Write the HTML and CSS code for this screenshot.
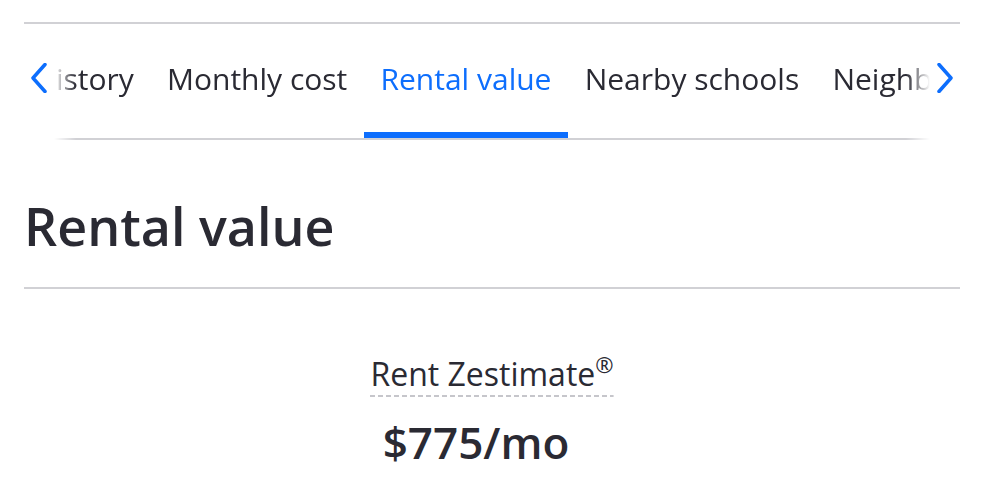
FILE: index.html
```html
<!DOCTYPE html>
<html>
<head>
<meta http-equiv="Content-Type" content="text/html;charset=UTF-8">
<link rel="stylesheet" href="styles.css">
</head>
<body>
<div class="homeDetails">
  <div class="tabNav">
    <button class="tabArrow" type="button" aria-label="Previous">
      <svg width="18" height="30" viewBox="0 0 18 30"><path d="M15 1.5 L3 15 L15 28.5" fill="none" stroke="#0d6efd" stroke-width="3.5" stroke-linecap="round" stroke-linejoin="round"/></svg>
    </button>
    <div class="tabViewport">
      <ul class="tabTrack">
        <li class="tab">Price history</li>
        <li class="tab">Monthly cost</li>
        <li class="tab active">Rental value</li>
        <li class="tab">Nearby schools</li>
        <li class="tab">Neighborhood</li>
      </ul>
    </div>
    <button class="tabArrow" type="button" aria-label="Next">
      <svg width="18" height="30" viewBox="0 0 18 30"><path d="M3 1.5 L15 15 L3 28.5" fill="none" stroke="#0d6efd" stroke-width="3.5" stroke-linecap="round" stroke-linejoin="round"/></svg>
    </button>
  </div>

  <h2 class="sectionTitle">Rental value</h2>

  <div class="rentBox">
    <span class="rentLabel">Rent Zestimate<sup>&reg;</sup></span>
    <span class="rentValue">$775/mo</span>
  </div>
</div>
</body>
</html>
```

FILE: styles.css
```css
body{
  margin: 0;
  font-family: "Open Sans", "Noto Sans", sans-serif;
  color: #2a2a33;
  background: #fff;
}
.homeDetails{
  padding: 22px 26px 0 24px;
}
.tabNav{
  display: flex;
  align-items: flex-start;
  border-top: 2px solid #d1d1d5;
}
.tabArrow{
  flex: 0 0 30px;
  height: 116px;
  padding: 0 0 8px;
  border: 0;
  background: none;
  display: flex;
  align-items: center;
  justify-content: center;
}
.tabArrow svg{
  display: block;
}
.tabViewport{
  flex: 1;
  overflow: hidden;
  border-bottom: 2px solid #d1d1d5;
  -webkit-mask-image: linear-gradient(to right, transparent 0, #000 22px, #000 calc(100% - 24px), transparent 100%);
  mask-image: linear-gradient(to right, transparent 0, #000 22px, #000 calc(100% - 24px), transparent 100%);
}
.tabTrack{
  display: flex;
  list-style: none;
  margin: 0 0 0 -110px;
  padding: 0;
}
.tab{
  flex: none;
  padding: 35px 16.6px 33px;
  font-size: 30px;
  line-height: 40px;
  white-space: nowrap;
  border-bottom: 6px solid transparent;
}
.tab.active{
  color: #0d6efd;
  border-bottom-color: #0d6efd;
}
.sectionTitle{
  margin: 0;
  padding: 52px 0 27px;
  font-size: 52px;
  line-height: 68px;
  font-weight: 600;
  border-bottom: 2px solid #d1d1d5;
}
.rentBox{
  display: flex;
  flex-direction: column;
  align-items: center;
  padding: 64px 0 0;
}
.rentLabel{
  font-size: 32px;
  line-height: 42px;
  padding-bottom: 2px;
  background: repeating-linear-gradient(to right, #c6c6cb 0 5px, transparent 5px 8px) bottom / 100% 2px no-repeat;
}
.rentLabel sup{
  font-size: 22px;
  line-height: 0;
  vertical-align: 13px;
}
.rentValue{
  margin-top: 16px;
  margin-left: -32px;
  font-size: 44px;
  line-height: 58px;
  font-weight: 600;
}
```
